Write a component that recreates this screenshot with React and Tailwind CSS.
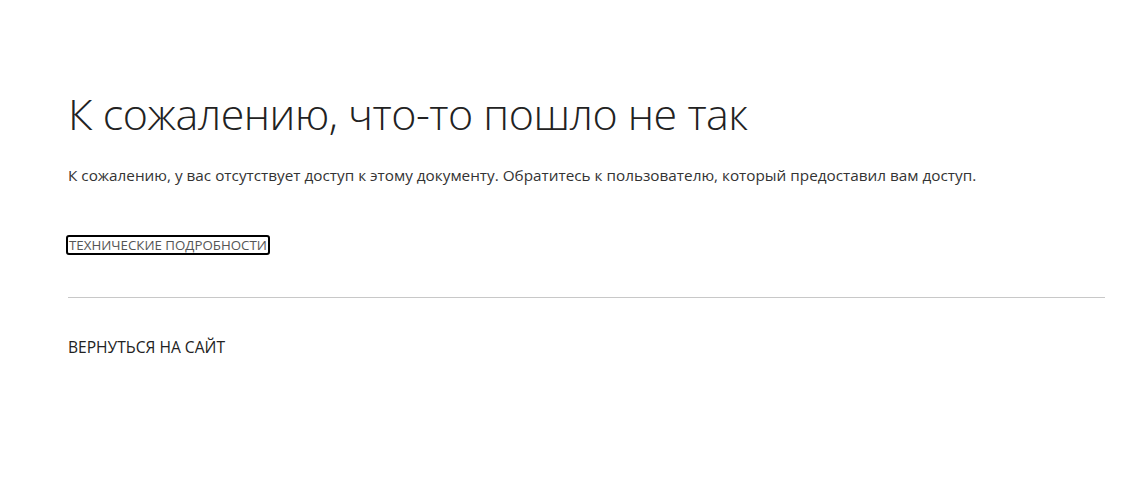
export default function App() {
  return (
    <div
      className="min-h-[503px] bg-white pl-[68px] pr-[41px] pt-[84px]"
      style={{ fontFamily: '"Open Sans", "Noto Sans", sans-serif' }}
    >
      <h1 className="text-[43px] font-light leading-[60px] text-[#222] tracking-[-0.5px]">
        К сожалению, что-то пошло не так
      </h1>
      <p className="mt-[21px] text-[15.3px] leading-[20px] text-[#333]">
        К сожалению, у вас отсутствует доступ к этому документу. Обратитесь к пользователю, который предоставил вам доступ.
      </p>
      <div className="mt-[47px]">
        <button className="-ml-[2px] rounded-[3px] border-2 border-black px-[1px] text-[13.3px] leading-[16px] text-[#555]">
          ТЕХНИЧЕСКИЕ ПОДРОБНОСТИ
        </button>
      </div>
      <div className="mt-[41px] h-px bg-[#c8c8c8]" />
      <div className="mt-[39px] text-[15.6px] leading-[20px] text-[#222]">ВЕРНУТЬСЯ НА САЙТ</div>
    </div>
  );
}
